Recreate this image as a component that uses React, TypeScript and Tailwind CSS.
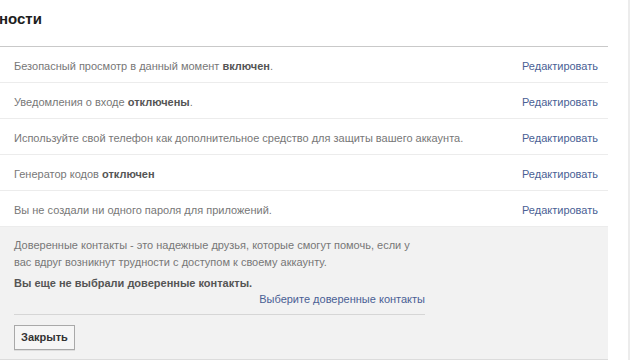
const rows: { text: string; bold?: string; tail?: string }[] = [
  { text: 'Безопасный просмотр в данный момент ', bold: 'включен', tail: '.' },
  { text: 'Уведомления о входе ', bold: 'отключены', tail: '.' },
  { text: 'Используйте свой телефон как дополнительное средство для защиты вашего аккаунта.' },
  { text: 'Генератор кодов ', bold: 'отключен' },
  { text: 'Вы не создали ни одного пароля для приложений.' },
];

export default function App() {
  return (
    <div
      className="w-[640px] h-[360px] overflow-hidden bg-white flex"
      style={{ fontFamily: '"Liberation Sans", Arial, sans-serif' }}
    >
      <div className="w-[608px] flex flex-col">
        {/* заголовок */}
        <div className="h-[47px] border-b border-[#c9c9c9] pt-[10px]">
          <h2 className="text-[15px] font-bold leading-[18px] text-[#1d1d1d] -ml-[1px]">ности</h2>
        </div>

        {rows.map((r, i) => (
          <div
            key={i}
            className="h-[36px] flex items-center justify-between pl-[14px] pr-[10px] pt-[3px] border-b border-[#ececec] text-[11px] text-[#777]"
          >
            <span>
              {r.text}
              {r.bold && <b className="text-[#555]">{r.bold}</b>}
              {r.tail}
            </span>
            <a className="text-[#4a5f95]">Редактировать</a>
          </div>
        ))}

        {/* доверенные контакты */}
        <div className="flex-1 bg-[#f2f2f2] pl-[14px] pt-[10px] text-[11px] text-[#777] border-b border-[#dcdcdc]">
          <p className="leading-[17px] w-[400px]">
            Доверенные контакты - это надежные друзья, которые смогут помочь, если у вас вдруг возникнут трудности с доступом к своему аккаунту.
          </p>
          <p className="font-bold text-[#555] mt-[4px] leading-[17px]">Вы еще не выбрали доверенные контакты.</p>
          <div className="w-[411px] flex justify-end border-b border-[#d6d6d6] pb-[8px]">
            <a className="text-[#4a5f95] leading-[14px]">Выберите доверенные контакты</a>
          </div>
          <button className="mt-[10px] h-[25px] px-[6px] bg-[#f6f6f6] border border-[#a9a9a9] text-[11px] font-bold text-[#333] shadow-[0_1px_0_#ddd]">
            Закрыть
          </button>
        </div>
      </div>
      <div className="w-[20px]" />
      <div className="w-[2px] bg-[#ececec]" />
    </div>
  );
}
